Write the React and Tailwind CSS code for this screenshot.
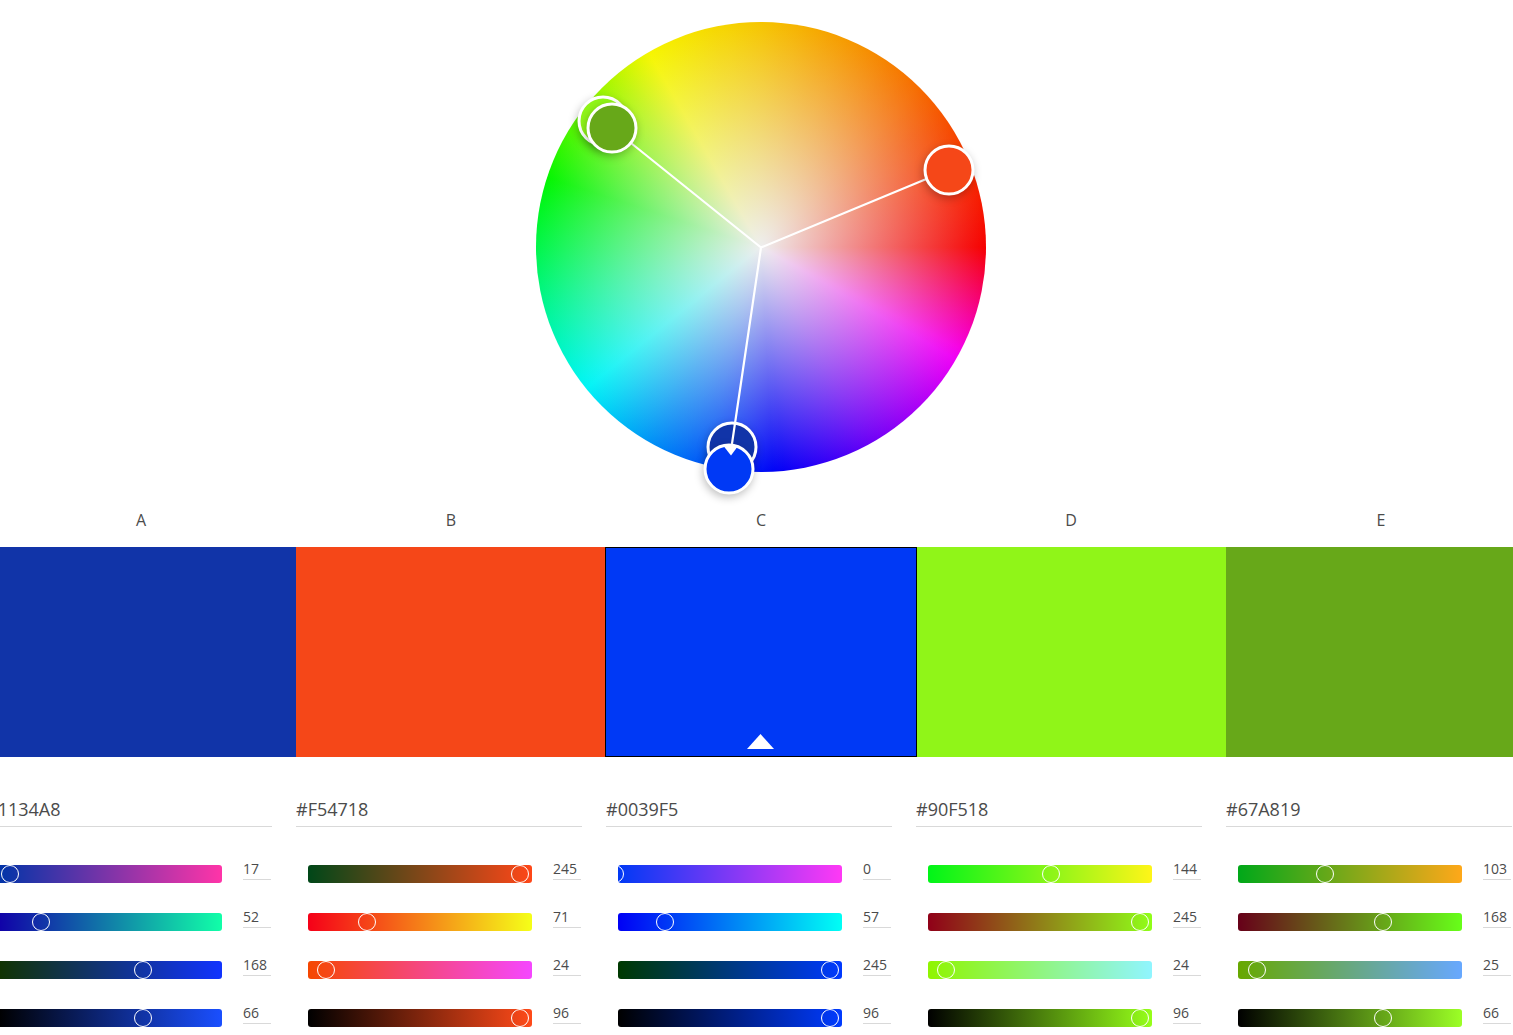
import React, { useState } from 'react';

const SWATCHES = [
    { name: 'A', rgb: [17, 52, 168], brightness: 66 },
    { name: 'B', rgb: [245, 71, 24], brightness: 96 },
    { name: 'C', rgb: [0, 57, 245], brightness: 96 },
    { name: 'D', rgb: [144, 245, 24], brightness: 96 },
    { name: 'E', rgb: [103, 168, 25], brightness: 66 },
];

// Marker centers on the 450 x 450 wheel
const MARKERS = [
    { name: 'A', x: 195.5, y: 424.5 },
    { name: 'B', x: 412.5, y: 147.5 },
    { name: 'D', x: 66.5, y: 98.5 },
    { name: 'E', x: 75.5, y: 105.5 },
    { name: 'C', x: 192.5, y: 446.5 },
];

// Artistic wheel: the hue drawn every 15 degrees, counterclockwise from the right
const WHEEL_HUES = [
    0, 8, 17, 26, 34, 41, 48, 54, 60, 81, 103, 123, 138,
    155, 171, 187, 204, 219, 236, 251, 267, 282, 298, 329, 360,
];

const CHANNELS = ['Red', 'Green', 'Blue'];

const toRgb = (rgb) => `rgb(${rgb.map(Math.round).join(' ')})`;

const toHex = (rgb) => '#' + rgb.map((v) => v.toString(16).padStart(2, '0')).join('').toUpperCase();

// Fully saturated color for a hue, at 96% brightness
const hueToRgb = (hue) => {
    const channel = (n) => {
        const k = (n + hue / 60) % 6;
        return 246 * (1 - Math.max(0, Math.min(k, 4 - k, 1)));
    };
    return [channel(5), channel(3), channel(1)];
};

// One stop every 3 degrees, hue interpolated between the table entries
const wheelGradient = () => {
    const stops = [];
    for (let deg = 360; deg >= 0; deg -= 3) {
        const i = Math.min(Math.floor(deg / 15), 23);
        const t = deg / 15 - i;
        const hue = WHEEL_HUES[i] + (WHEEL_HUES[i + 1] - WHEEL_HUES[i]) * t;
        stops.push(`${toRgb(hueToRgb(hue))} ${360 - deg}deg`);
    }
    return `radial-gradient(closest-side, rgb(238 238 238), rgb(245 245 245 / 0)), conic-gradient(from 90deg, ${stops.join(', ')})`;
};

const channelGradient = (rgb, index) => {
    const from = rgb.map((v, i) => (i === index ? 0 : v));
    const to = rgb.map((v, i) => (i === index ? 255 : v));
    return `linear-gradient(to right, ${toRgb(from)}, ${toRgb(to)})`;
};

const brightnessGradient = (rgb) => {
    const max = Math.max(...rgb);
    return `linear-gradient(to right, #000, ${toRgb(rgb.map((v) => (v * 255) / max))})`;
};

const Marker = ({ name, x, y, onSelect }) => {
    const swatch = SWATCHES.find((s) => s.name === name);
    return (
        <button
            type="button"
            aria-label={`Color ${name}`}
            onClick={() => onSelect(name)}
            className="absolute size-[51px] -translate-1/2 rounded-full border-3 border-white shadow-[-1px_3px_8px_rgba(0,0,0,0.25)]"
            style={{ left: `${x / 4.5}%`, top: `${y / 4.5}%`, backgroundColor: toRgb(swatch.rgb) }}
        />
    );
};

const ColorWheel = ({ onSelect }) => {
    const [first, ...rest] = MARKERS;
    return (
        <div className="relative size-[450px] rounded-full" style={{ backgroundImage: wheelGradient() }}>
            <Marker {...first} onSelect={onSelect} />
            <svg className="pointer-events-none absolute inset-0 overflow-visible" viewBox="0 0 450 450" fill="none" aria-hidden="true">
                <path d="M225 225.5 75 105M225 225.5 412 148M225 225.5 195.5 425" stroke="#fff" strokeWidth="2.2" />
            </svg>
            {rest.map((marker) => (
                <Marker key={marker.name} {...marker} onSelect={onSelect} />
            ))}
            <svg className="pointer-events-none absolute inset-0 overflow-visible" viewBox="0 0 450 450" aria-hidden="true">
                <path d="M187.500 424 194 422.500 202 424 195 433.500z" fill="#fff" />
            </svg>
        </div>
    );
};

const SliderRow = ({ label, value, max, gradient, onChange }) => (
    <div className="flex h-[25px] gap-[21px] pl-3 pr-px">
        <div className="flex h-[18px] flex-1 self-end overflow-hidden rounded-[3px]" style={{ backgroundImage: gradient }}>
            <input
                type="range"
                aria-label={label}
                min={0}
                max={max}
                value={value}
                onChange={(e) => onChange(Number(e.target.value))}
                className="-ml-3 h-[18px] w-[calc(100%+18px)] shrink-0 appearance-none bg-transparent [&::-webkit-slider-thumb]:size-[18px] [&::-webkit-slider-thumb]:appearance-none [&::-webkit-slider-thumb]:rounded-full [&::-webkit-slider-thumb]:border [&::-webkit-slider-thumb]:border-solid [&::-webkit-slider-thumb]:border-white [&::-webkit-slider-thumb]:bg-transparent"
            />
        </div>
        <input
            type="text"
            aria-label={`${label} value`}
            value={value}
            onChange={(e) => onChange(Math.min(Number(e.target.value) || 0, max))}
            className="h-[22px] w-7 border-b border-[#d9d9d9] text-[14px] leading-5"
        />
    </div>
);

const ColorColumn = ({ swatch, selected, onSelect }) => {
    const [rgb, setRgb] = useState(swatch.rgb);
    const [brightness, setBrightness] = useState(swatch.brightness);

    const setChannel = (index, value) => setRgb(rgb.map((v, i) => (i === index ? value : v)));

    return (
        <section className="min-w-0">
            <h2 className="mb-[15px] text-center text-[16px] leading-6">{swatch.name}</h2>
            <button
                type="button"
                aria-label={`Select color ${swatch.name}`}
                onClick={() => onSelect(swatch.name)}
                className={`flex h-[210px] w-full items-end justify-center ${selected ? 'relative border-y border-black pb-[7px] shadow-[1px_0_0_#000,-1px_0_0_#000]' : 'pb-2'}`}
                style={{ backgroundColor: toRgb(rgb) }}
            >
                {selected && (
                    <svg width="28" height="15" viewBox="0 0 28 15" aria-hidden="true">
                        <path d="M0 15 13.500 0 27 15z" fill="#fff" />
                    </svg>
                )}
            </button>
            <div className="pr-6 pt-[35px]">
                <input
                    type="text"
                    aria-label={`Hex value of color ${swatch.name}`}
                    value={toHex(rgb)}
                    readOnly
                    className="block h-[35px] w-full border-b border-[#d9d9d9] text-[18px]"
                />
                <div className="mt-[31px] flex flex-col gap-[23px]">
                    {CHANNELS.map((channel, i) => (
                        <SliderRow
                            key={channel}
                            label={channel}
                            value={rgb[i]}
                            max={255}
                            gradient={channelGradient(rgb, i)}
                            onChange={(value) => setChannel(i, value)}
                        />
                    ))}
                    <SliderRow
                        label="Brightness"
                        value={brightness}
                        max={100}
                        gradient={brightnessGradient(rgb)}
                        onChange={setBrightness}
                    />
                </div>
            </div>
        </section>
    );
};

const App = () => {
    const [selected, setSelected] = useState('C');

    return (
        <main className="overflow-hidden bg-white pb-2 font-['Open_Sans',sans-serif] text-[#4b4b4b]">
            {/* The strip bleeds past both sides of the window */}
            <div className="-ml-3.5 -mr-[23px]">
                <div className="flex justify-center pb-9 pt-[22px]">
                    <ColorWheel onSelect={setSelected} />
                </div>
                <div className="grid grid-cols-5">
                    {SWATCHES.map((swatch) => (
                        <ColorColumn
                            key={swatch.name}
                            swatch={swatch}
                            selected={selected === swatch.name}
                            onSelect={setSelected}
                        />
                    ))}
                </div>
            </div>
        </main>
    );
};

export default App;
